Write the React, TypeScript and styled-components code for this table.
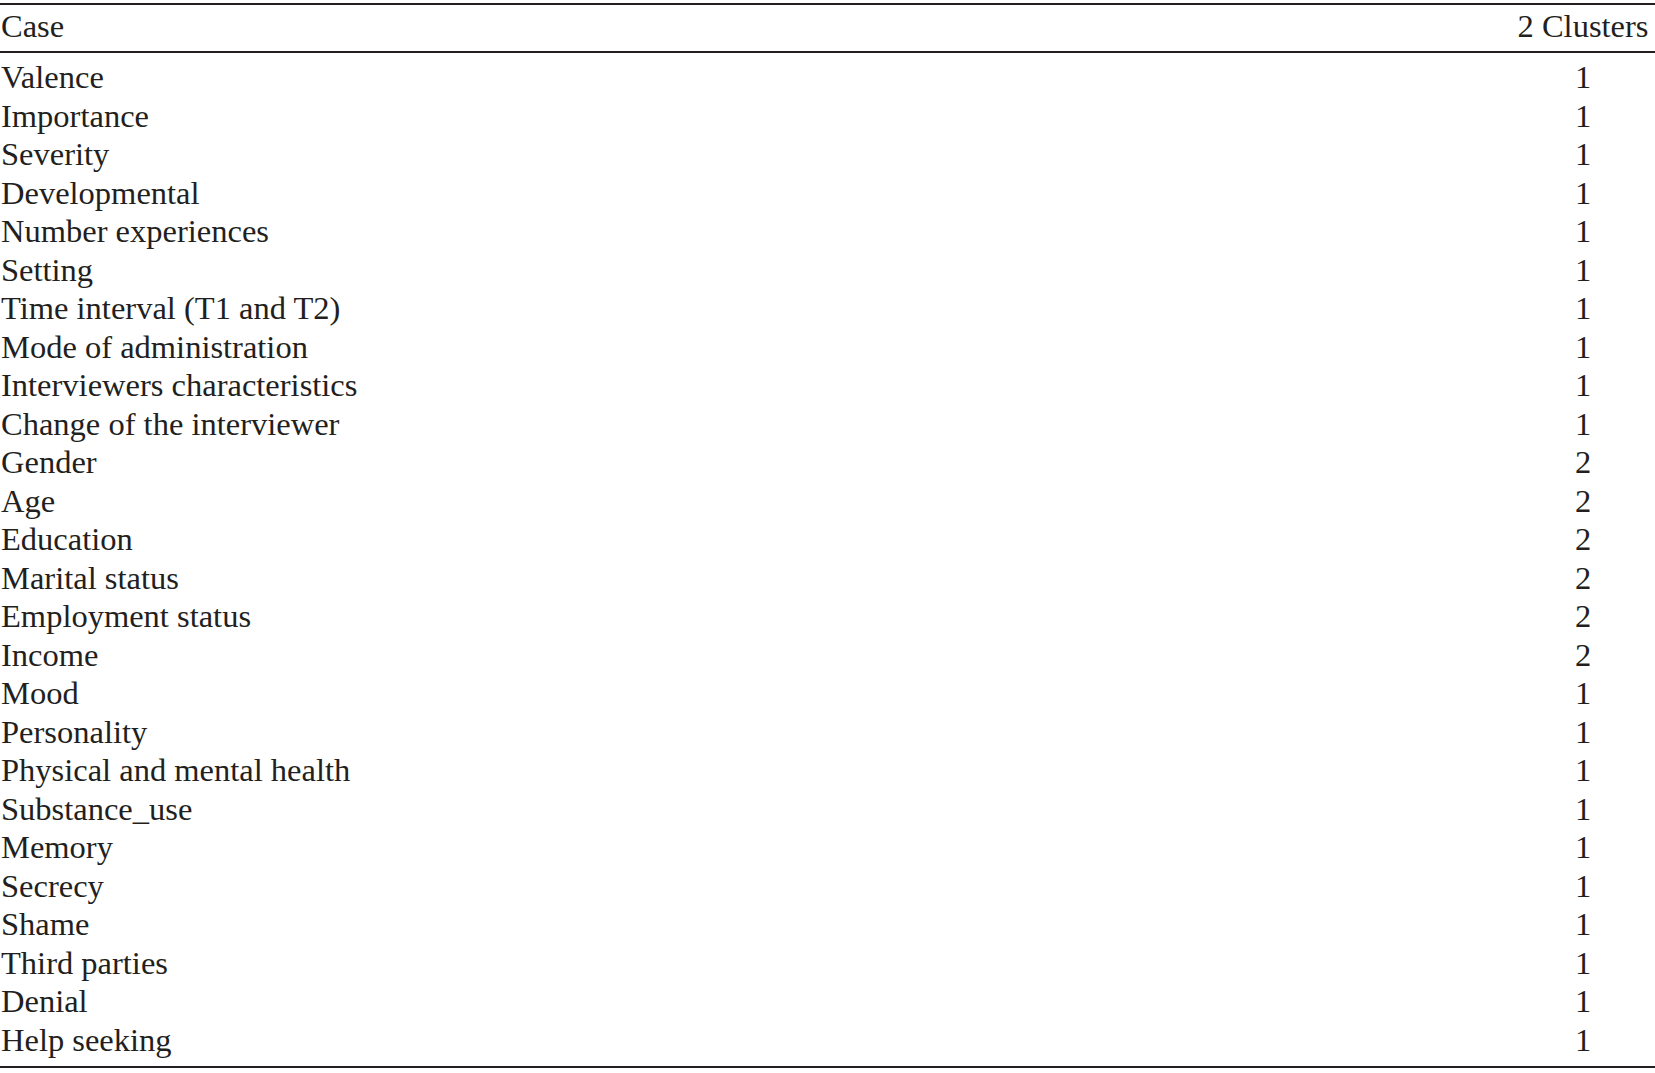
import styled, { createGlobalStyle } from "styled-components";

const GlobalStyle = createGlobalStyle`
  html, body {
    margin: 0;
    padding: 0;
    background: #ffffff;
  }
  body {
    font-family: "Liberation Serif", "Times New Roman", serif;
    color: #231f20;
  }
`;

const Page = styled.div`
  width: 1655px;
  padding-top: 3px;
`;

const Table = styled.div`
  border-top: 2px solid #231f20;
  border-bottom: 2px solid #231f20;
  font-size: 32.5px;
`;

const Row = styled.div<{ $head?: boolean }>`
  display: grid;
  grid-template-columns: 1fr 144px;
  height: ${({ $head }) => ($head ? "43px" : "38.5px")};
  line-height: ${({ $head }) => ($head ? "43px" : "38.5px")};
  padding-bottom: ${({ $head }) => ($head ? "3px" : "0")};
  border-bottom: ${({ $head }) => ($head ? "2px solid #231f20" : "none")};
`;

const Body = styled.div`
  padding: 5px 0 7px;
`;

const Label = styled.div`
  padding-left: 1px;
  white-space: nowrap;
`;

const Value = styled.div`
  text-align: center;
  white-space: nowrap;
`;

const rows: [string, number][] = [
  ["Valence", 1],
  ["Importance", 1],
  ["Severity", 1],
  ["Developmental", 1],
  ["Number experiences", 1],
  ["Setting", 1],
  ["Time interval (T1 and T2)", 1],
  ["Mode of administration", 1],
  ["Interviewers characteristics", 1],
  ["Change of the interviewer", 1],
  ["Gender", 2],
  ["Age", 2],
  ["Education", 2],
  ["Marital status", 2],
  ["Employment status", 2],
  ["Income", 2],
  ["Mood", 1],
  ["Personality", 1],
  ["Physical and mental health", 1],
  ["Substance_use", 1],
  ["Memory", 1],
  ["Secrecy", 1],
  ["Shame", 1],
  ["Third parties", 1],
  ["Denial", 1],
  ["Help seeking", 1],
];

export default function App() {
  return (
    <>
      <GlobalStyle />
      <Page>
        <Table>
          <Row $head>
            <Label>Case</Label>
            <Value>2 Clusters</Value>
          </Row>
          <Body>
            {rows.map(([name, cluster]) => (
              <Row key={name}>
                <Label>{name}</Label>
                <Value>{cluster}</Value>
              </Row>
            ))}
          </Body>
        </Table>
      </Page>
    </>
  );
}
